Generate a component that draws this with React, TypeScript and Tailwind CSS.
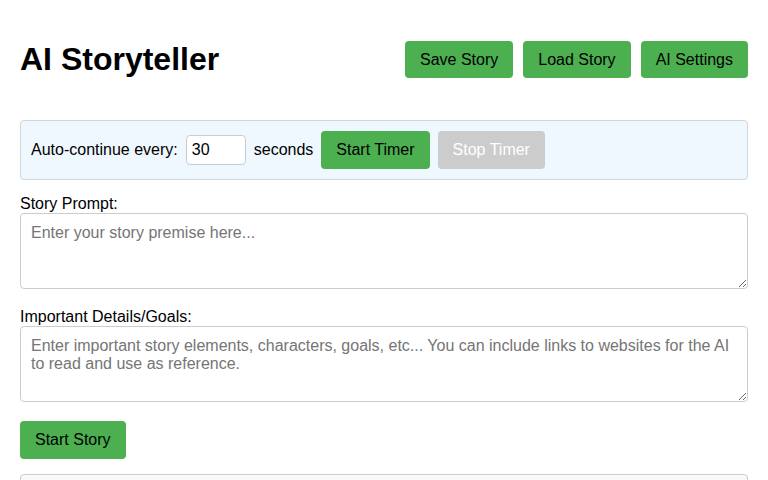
export default function App() {
  const font = { fontFamily: '"Liberation Sans", Arial, sans-serif' };
  const btn =
    "bg-[#4CAF50] text-black text-[16px] leading-[18px] px-[15px] py-[10px] rounded-[4px] border-0";
  return (
    <div className="bg-white min-h-[480px] p-[20px] text-black text-[16px]" style={font}>
      <div className="flex items-center justify-between h-[37px] mt-[21px] mb-[42px]">
        <h1 className="text-[32px] font-bold leading-[37px] m-0">AI Storyteller</h1>
        <div className="flex gap-[10px]">
          <button className={btn + " h-[37px]"}>Save Story</button>
          <button className={btn + " h-[37px]"}>Load Story</button>
          <button className={btn + " h-[37px]"}>AI Settings</button>
        </div>
      </div>
      <div className="bg-[#f0f8ff] border border-[#cfd6dc] rounded-[4px] px-[10px] h-[60px] flex items-center gap-[8px] mb-[15px]">
        <span>Auto-continue every:</span>
        <input
          type="number"
          defaultValue={30}
          className="w-[60px] h-[30px] bg-white border border-[#ccc] rounded-[4px] px-[5px] text-[16px] outline-none [appearance:textfield] [&::-webkit-inner-spin-button]:appearance-none"
          style={font}
        />
        <span>seconds</span>
        <button className={btn + " h-[38px]"}>Start Timer</button>
        <button className="bg-[#cccccc] text-white text-[16px] leading-[18px] px-[15px] h-[38px] rounded-[4px]">
          Stop Timer
        </button>
      </div>
      <label className="block leading-[18px]">Story Prompt:</label>
      <textarea
        className="block w-full h-[76px] border border-[#ccc] rounded-[4px] p-[10px] text-[16px] leading-[18px] placeholder:text-[#757575] mb-[19px]"
        style={font}
        placeholder="Enter your story premise here..."
      />
      <label className="block leading-[18px]">Important Details/Goals:</label>
      <textarea
        className="block w-full h-[76px] border border-[#ccc] rounded-[4px] p-[10px] text-[16px] leading-[18px] placeholder:text-[#757575] mb-[19px]"
        style={font}
        placeholder="Enter important story elements, characters, goals, etc... You can include links to websites for the AI to read and use as reference."
      />
      <button className={btn + " h-[38px] block"}>Start Story</button>
      <div className="mt-[15px] h-[200px] border border-[#ccc] rounded-[4px] bg-[#f9f9f9]" />
    </div>
  );
}
